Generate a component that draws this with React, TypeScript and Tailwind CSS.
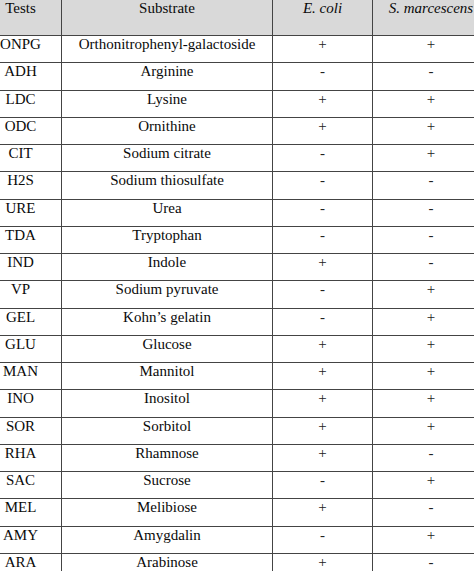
import React from "react";

const rows: [string, string, string, string][] = [
  ["ONPG", "Orthonitrophenyl-galactoside", "+", "+"],
  ["ADH", "Arginine", "-", "-"],
  ["LDC", "Lysine", "+", "+"],
  ["ODC", "Ornithine", "+", "+"],
  ["CIT", "Sodium citrate", "-", "+"],
  ["H2S", "Sodium thiosulfate", "-", "-"],
  ["URE", "Urea", "-", "-"],
  ["TDA", "Tryptophan", "-", "-"],
  ["IND", "Indole", "+", "-"],
  ["VP", "Sodium pyruvate", "-", "+"],
  ["GEL", "Kohn\u2019s gelatin", "-", "+"],
  ["GLU", "Glucose", "+", "+"],
  ["MAN", "Mannitol", "+", "+"],
  ["INO", "Inositol", "+", "+"],
  ["SOR", "Sorbitol", "+", "+"],
  ["RHA", "Rhamnose", "+", "-"],
  ["SAC", "Sucrose", "-", "+"],
  ["MEL", "Melibiose", "+", "-"],
  ["AMY", "Amygdalin", "-", "+"],
  ["ARA", "Arabinose", "+", "-"],
];

export default function App() {
  return (
    <div className="w-[474px] h-[571px] overflow-hidden bg-white text-[#0a0a0a] font-['Liberation_Serif',serif] text-[15px] leading-[17px]">
      <div className="w-[489px]">
        <div className="grid grid-cols-[62px_211px_100px_116px] h-[35px] bg-[#d9d9d9]">
          <div className="border-r border-[#444] pr-[20px] text-center">Tests</div>
          <div className="border-r border-[#444] text-center">Substrate</div>
          <div className="border-r border-[#444] text-center italic">E. coli</div>
          <div className="text-center italic">S. marcescens</div>
        </div>
        {rows.map((r) => (
          <div
            key={r[0]}
            className="grid grid-cols-[62px_211px_100px_116px] h-[27.25px] border-t border-[#444]"
          >
            <div className="border-r border-[#444] pr-[20px] text-center">{r[0]}</div>
            <div className="border-r border-[#444] text-center">{r[1]}</div>
            <div className="border-r border-[#444] text-center text-[#222]">{r[2]}</div>
            <div className="text-center text-[#222]">{r[3]}</div>
          </div>
        ))}
      </div>
    </div>
  );
}
